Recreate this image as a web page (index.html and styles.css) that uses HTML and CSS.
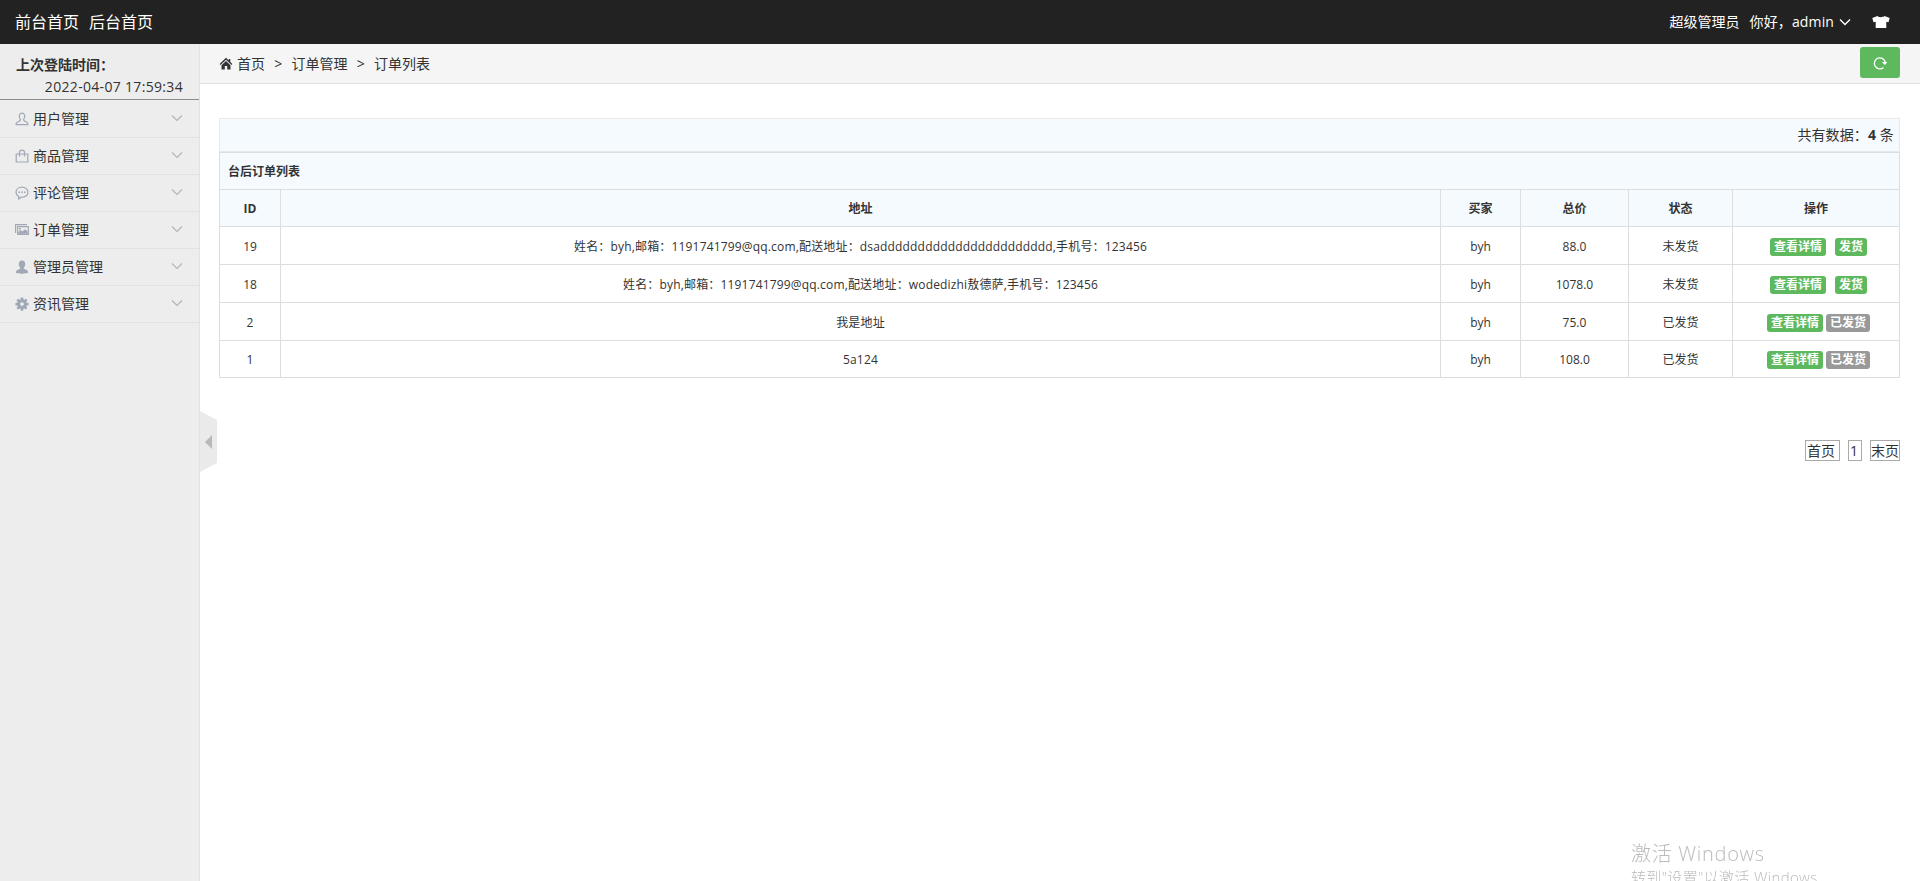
FILE: index.html
```html
<!DOCTYPE html>
<html lang="zh-CN">

<head>
    <meta charset="UTF-8">
    <meta name="viewport" content="width=device-width, initial-scale=1.0">
    <title>订单列表</title>
    <link rel="stylesheet" href="styles.css">
</head>

<body>

    <!-- 顶部导航 -->
    <header class="navbar">
        <nav class="nav-left">
            <a href="#">前台首页</a>
            <a href="#">后台首页</a>
        </nav>
        <ul class="nav-right">
            <li>超级管理员</li>
            <li class="nav-user">你好，admin
                <svg class="arrow" width="12" height="12" viewBox="0 0 12 12"><path d="M1 3.5l5 5 5-5" /></svg>
            </li>
            <li class="nav-skin">
                <svg width="18" height="14" viewBox="0 0 18 14"><path d="M5.500 1C6.500 2.600 11.500 2.600 12.500 1L17.700 3 16.500 7.300 14.300 6.800V13H3.700V6.800L1.500 7.300 .3 3z" /></svg>
            </li>
        </ul>
    </header>

    <div class="container">

        <!-- 左侧菜单 -->
        <aside class="sidebar">
            <div class="last-login">
                <b>上次登陆时间：</b>
                <span>2022-04-07 17:59:34</span>
            </div>
            <ul class="menu">
                <li>
                    <svg class="icon line" viewBox="0 0 14 14"><path d="M7 1.200C5.200 1.200 4.300 2.400 4.300 4.200 4.300 5.800 4.800 6.800 5.500 7.600 5.500 9 4.500 9.200 3 9.800 1.500 10.300 1 11 1 12.600H13C13 11 12.500 10.300 11 9.800 9.500 9.200 8.500 9 8.500 7.600 9.200 6.800 9.700 5.800 9.700 4.200 9.700 2.400 8.800 1.200 7 1.200z" /></svg>
                    <span>用户管理</span>
                    <svg class="arrow" width="12" height="12" viewBox="0 0 12 12"><path d="M1 3.500l5 5 5-5" /></svg>
                </li>
                <li>
                    <svg class="icon line" viewBox="0 0 14 14"><path d="M1.200 5H12.800V13H1.200zM4.500 7.500V3.500C4.500 .4 9.500 .4 9.500 3.500V7.500" /></svg>
                    <span>商品管理</span>
                    <svg class="arrow" width="12" height="12" viewBox="0 0 12 12"><path d="M1 3.500l5 5 5-5" /></svg>
                </li>
                <li>
                    <svg class="icon line" viewBox="0 0 14 14"><path d="M7 1.200C3.600 1.200 1 3.300 1 6.200 1 8.200 2 9.500 3.600 10.400V13L6 11.200C10 11.500 13 9.300 13 6.200 13 3.300 10.400 1.200 7 1.200z" /><path class="fill" d="M3.300 5.500h1.600v1.600H3.300zM6.200 5.500h1.600v1.600H6.200zM9.100 5.500h1.600v1.600H9.100z" /></svg>
                    <span>评论管理</span>
                    <svg class="arrow" width="12" height="12" viewBox="0 0 12 12"><path d="M1 3.500l5 5 5-5" /></svg>
                </li>
                <li>
                    <svg class="icon line" viewBox="0 0 14 14"><path d="M.6 10V1.700H12" /><path d="M2.700 3.700H13.300V11.300H2.700z" /><path class="fill" d="M3.300 10.800V9L5.500 7 7.300 8.500 10 6.200 12.800 8.500V10.800zM4 5h1.800v1.600H4z" /></svg>
                    <span>订单管理</span>
                    <svg class="arrow" width="12" height="12" viewBox="0 0 12 12"><path d="M1 3.500l5 5 5-5" /></svg>
                </li>
                <li>
                    <svg class="icon" viewBox="0 0 14 14"><path class="fill" d="M7 .4C4.800 .4 3.800 1.800 3.800 4 3.800 5.700 4.400 7 5.200 7.700V8.800L2.400 9.900C1.200 10.400 1 11.300 1 13L5.500 13.400 7 13.900 8.500 13.400 13 13C13 11.300 12.800 10.400 11.600 9.900L8.800 8.800V7.700C9.600 7 10.200 5.700 10.200 4 10.200 1.800 9.200 .4 7 .4z" /></svg>
                    <span>管理员管理</span>
                    <svg class="arrow" width="12" height="12" viewBox="0 0 12 12"><path d="M1 3.500l5 5 5-5" /></svg>
                </li>
                <li>
                    <svg class="icon" viewBox="0 0 14 14"><path class="fill" fill-rule="evenodd" d="M5.800 .5h2.400l.3 1.900 .9 .4L11 1.700 12.500 3.200 11.300 4.700l.4 1 1.900 .2v2.300l-1.900 .3-.4 .9 1.100 1.500-1.600 1.600-1.500-1.100-.9 .4-.3 1.900H5.800l-.3-1.900-.9-.4-1.500 1.100-1.600-1.600 1.100-1.500-.4-.9L.4 8.200V5.900l1.800-.2 .4-1L1.500 3.200 3.100 1.700l1.500 1.100 .9-.4zM7 5.200a1.800 1.800 0 1 0 .01 0z" /></svg>
                    <span>资讯管理</span>
                    <svg class="arrow" width="12" height="12" viewBox="0 0 12 12"><path d="M1 3.500l5 5 5-5" /></svg>
                </li>
            </ul>
        </aside>

        <!-- 右侧内容 -->
        <main class="content">
            <div class="toggle"><i></i></div>

            <nav class="breadcrumb">
                <svg class="home" width="14" height="14" viewBox="0 0 14 14"><path d="M7 .8L.6 7l.9 .9L7 2.700l5.500 5.200 .9-.9L11.300 5V2H9.800V3.500z" /><path d="M7 4L2.500 8.200V12.500H5.800V9H8.200V12.500H11.500V8.200z" /></svg>
                <span>首页</span>
                <i>&gt;</i>
                <span>订单管理</span>
                <i>&gt;</i>
                <span>订单列表</span>
                <button class="refresh-btn">
                    <svg width="16" height="16" viewBox="0 0 16 16"><path class="ring" d="M11.500 12.500A5.500 5.500 0 1 1 13.300 7.500" /><path class="tip" d="M9.800 7H15.400L12.900 10z" /></svg>
                </button>
            </nav>

            <div class="page">
                <div class="total">共有数据：<strong>4</strong> 条</div>

                <table class="order-table">
                    <colgroup>
                        <col class="col-id">
                        <col>
                        <col class="col-buyer">
                        <col class="col-price">
                        <col class="col-state">
                        <col class="col-action">
                    </colgroup>
                    <thead>
                        <tr>
                            <th class="caption" colspan="6">台后订单列表</th>
                        </tr>
                        <tr>
                            <th>ID</th>
                            <th>地址</th>
                            <th>买家</th>
                            <th>总价</th>
                            <th>状态</th>
                            <th>操作</th>
                        </tr>
                    </thead>
                    <tbody>
                        <tr>
                            <td>19</td>
                            <td class="address">姓名：byh,邮箱：1191741799@qq.com,配送地址：dsaddddddddddddddddddddddd,手机号：123456</td>
                            <td>byh</td>
                            <td>88.0</td>
                            <td>未发货</td>
                            <td><div class="actions wide"><a class="label">查看详情</a><a class="label">发货</a></div></td>
                        </tr>
                        <tr>
                            <td>18</td>
                            <td class="address">姓名：byh,邮箱：1191741799@qq.com,配送地址：wodedizhi敖德萨,手机号：123456</td>
                            <td>byh</td>
                            <td>1078.0</td>
                            <td>未发货</td>
                            <td><div class="actions wide"><a class="label">查看详情</a><a class="label">发货</a></div></td>
                        </tr>
                        <tr>
                            <td>2</td>
                            <td class="address">我是地址</td>
                            <td>byh</td>
                            <td>75.0</td>
                            <td>已发货</td>
                            <td><div class="actions"><a class="label">查看详情</a><a class="label gray">已发货</a></div></td>
                        </tr>
                        <tr class="last">
                            <td>1</td>
                            <td class="address">5a124</td>
                            <td>byh</td>
                            <td>108.0</td>
                            <td>已发货</td>
                            <td><div class="actions"><a class="label">查看详情</a><a class="label gray">已发货</a></div></td>
                        </tr>
                    </tbody>
                </table>

                <div class="pager">
                    <a class="first" href="#">首页</a>
                    <a class="num" href="#">1</a>
                    <a href="#">末页</a>
                </div>
            </div>
        </main>
    </div>

    <!-- 系统水印 -->
    <div class="watermark">
        <p class="big">激活 Windows</p>
        <p>转到"设置"以激活 Windows</p>
    </div>

</body>

</html>
```
FILE: styles.css
```css
* {
    box-sizing: border-box;
}

body {
    margin: 0;
    height: 100vh;
    overflow: hidden;
    display: flex;
    flex-direction: column;
    background-color: #fff;
    color: #333;
    font-family: "Open Sans", "Noto Sans CJK SC", sans-serif;
    font-size: 14px;
    line-height: 22px;
}

ul {
    margin: 0;
    padding: 0;
    list-style: none;
}

a {
    color: inherit;
    text-decoration: none;
}

svg {
    display: block;
    flex: none;
}

/* 顶部导航 */
.navbar {
    flex: none;
    height: 44px;
    padding: 0 30px 0 15px;
    display: flex;
    justify-content: space-between;
    align-items: center;
    background-color: #222;
    color: #fff;
}

.nav-left {
    display: flex;
    gap: 10px;
    font-size: 16px;
}

.nav-right {
    display: flex;
    align-items: center;
}

.nav-user {
    display: flex;
    align-items: center;
    gap: 5px;
    margin-left: 10px;
    letter-spacing: 0.12px;
}

.nav-skin {
    margin-left: 21px;
}

    .nav-skin path {
        fill: #fff;
    }

.arrow path {
    fill: none;
    stroke: #b5b5b5;
    stroke-width: 1.2;
}

.navbar .arrow path {
    stroke: #fff;
    stroke-width: 1.4;
}

.container {
    flex: 1;
    display: flex;
    min-height: 0;
}

/* 左侧菜单 */
.sidebar {
    flex: none;
    width: 200px;
    background-color: #ededed;
    border-right: 1px solid #e2e2e2;
}

.last-login {
    height: 56px;
    padding: 10px 16px 0;
    border-bottom: 1px solid #8c8c8c;
}

    .last-login b,
    .last-login span {
        display: block;
    }

    .last-login span {
        text-align: right;
        letter-spacing: 0.32px;
    }

.menu li {
    height: 37px;
    padding: 0 16px 0 15px;
    display: flex;
    align-items: center;
    border-bottom: 1px solid #e2e2e2;
}

.menu li:first-child {
    height: 38px;
}

.menu .icon {
    width: 14px;
    height: 14px;
    margin-right: 4px;
}

.menu .line path {
    fill: none;
    stroke: #a0a8b5;
    stroke-width: 1.2;
}

.menu .icon .fill {
    fill: #a0a8b5;
    stroke: none;
}

.menu .arrow {
    margin: 0 0 2px auto;
}

/* 右侧内容 */
.content {
    flex: 1;
    position: relative;
}

/* 收起菜单的把手 */
.toggle {
    position: absolute;
    left: 0;
    top: 367px;
    width: 17px;
    height: 61px;
    background-color: #eaeaea;
    clip-path: polygon(0 0, 100% 9px, 100% 52px, 0 100%);
}

    .toggle i {
        position: absolute;
        left: 5px;
        top: 24px;
        border: 7px solid transparent;
        border-left-width: 0;
        border-right-color: #b8b8b8;
    }

.breadcrumb {
    height: 40px;
    padding: 0 20px 0 19px;
    display: flex;
    align-items: center;
    background-color: #f5f5f5;
    border-bottom: 1px solid #e2e2e2;
}

    .breadcrumb i {
        width: 26.5px;
        text-align: center;
        font-style: normal;
    }

.home {
    margin-right: 4px;
}

    .home path {
        fill: #333;
    }

.refresh-btn {
    width: 40px;
    height: 31px;
    margin: 0 0 2px auto;
    padding: 0;
    display: flex;
    justify-content: center;
    align-items: center;
    border: none;
    border-radius: 3px;
    background-color: #5eb95e;
    cursor: pointer;
}

    .refresh-btn .ring {
        fill: none;
        stroke: #fff;
        stroke-width: 1.3;
    }

    .refresh-btn .tip {
        fill: #fff;
    }

.page {
    padding: 34px 20px 0 19px;
}

.total {
    height: 34px;
    padding: 0 5px;
    border: 1px solid #e9e9e9;
    background-color: #f5fafe;
    text-align: right;
    line-height: 31px;
    letter-spacing: 0.12px;
}

/* 订单表格 */
.order-table {
    width: 100%;
    table-layout: fixed;
    border-collapse: separate;
    border-spacing: 0;
    border-top: 1px solid #ddd;
    border-left: 1px solid #ddd;
    font-size: 12px;
    line-height: 18px;
    text-align: center;
}

    .order-table th,
    .order-table td {
        height: 38px;
        padding: 2px 0 0;
        border-right: 1px solid #ddd;
        border-bottom: 1px solid #ddd;
    }

    .order-table th,
    .order-table .last td {
        height: 37px;
    }

    .order-table th {
        background-color: #f5fafe;
    }

    .order-table .caption {
        padding-left: 8px;
        text-align: left;
    }

    .order-table .address {
        letter-spacing: 0.17px;
    }

.col-id {
    width: 61px;
}

.col-buyer {
    width: 80px;
}

.col-price {
    width: 108px;
}

.col-state {
    width: 104px;
}

.col-action {
    width: 167px;
}

.actions {
    display: flex;
    justify-content: center;
    gap: 3px;
    padding: 1px 0 0 5px;
}

.actions.wide {
    gap: 9px;
}

.last .actions {
    padding-top: 0;
}

.label {
    height: 18px;
    padding: 0 4px;
    border-radius: 3px;
    background-color: #5eb95e;
    color: #fff;
    font-weight: bold;
}

.label.gray {
    background-color: #999;
}

/* 分页 */
.pager {
    display: flex;
    justify-content: flex-end;
    gap: 8px;
    margin-top: 62px;
    line-height: 19px;
}

    .pager a {
        height: 21px;
        border: 1px solid #aaa;
    }

    .pager .first {
        padding: 0 4px 0 1px;
    }

    .pager .num {
        padding: 0 3px 0 1px;
    }

.watermark {
    position: fixed;
    left: 1631px;
    top: 840px;
    color: #bbb;
    font-size: 15px;
    font-weight: 300;
    line-height: 20px;
    letter-spacing: 0.35px;
    white-space: nowrap;
}

    .watermark p {
        margin: 0;
    }

    .watermark .big {
        font-size: 20px;
        line-height: 27px;
        letter-spacing: 0.7px;
    }
```
